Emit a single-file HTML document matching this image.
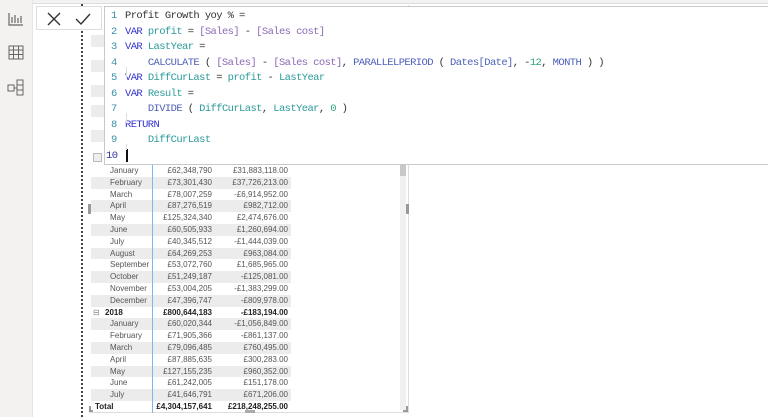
<!DOCTYPE html>
<html><head><meta charset="utf-8"><style>
*{margin:0;padding:0;box-sizing:border-box}
body{width:768px;height:417px;overflow:hidden;background:#fff;position:relative;font-family:"Liberation Sans",sans-serif}
.side{position:absolute;left:0;top:0;width:33px;height:417px;background:#f3f2f1;border-right:1px solid #e6e6e6}
.top{position:absolute;left:33px;top:0;right:0;height:4px;background:#f3f2f1;border-bottom:1px solid #ddd}
.dots{position:absolute;left:81px;top:4px;width:0;height:413px;border-left:2px dotted #444}
.frame{position:absolute;left:89px;top:5px;width:320px;height:408px;border-right:1px solid #ddd;border-bottom:1px solid #ddd}
.hdr{position:absolute;left:91px;top:5px;width:200px;height:160px}
.hdr div{position:absolute;left:0;width:200px;height:12px;background:#ececec}
.tb{position:absolute;left:91px;top:165px;font-size:8px;color:#555}
.r{position:relative;height:11.8px;width:200px;line-height:11.8px}
.r.s{background:#ececec}
.r span{position:absolute}
.m{left:19px}.a{right:79px}.b{right:3px}
.r.bold{font-weight:bold;color:#222}
.vline{position:absolute;left:152px;top:165px;width:1px;height:248px;background:#7ab8f0}
.sb{position:absolute;left:400px;top:165px;width:6px;height:245px;background:#f0f0f0}
.sb i{position:absolute;left:0;top:0;width:6px;height:11px;background:#c8c8c8}
.fb{position:absolute;left:104px;top:6px;width:664px;height:159px;background:#fff;border:1px solid #c8c8c8;border-right:none;font-family:"Liberation Mono",monospace;font-size:10.5px;letter-spacing:-0.6px}
.ln{position:absolute;left:6px;color:#3c8fa8}
.cd{position:absolute;left:20px;white-space:pre;color:#333}
.k{color:#3434d0}.v{color:#2b9a9a}.c{color:#8a69b5}.f{color:#4b5fb8}.n{color:#2fa37a}
.xc{position:absolute;left:36px;top:6px;width:66px;height:24px;background:#fff;border:1px solid #ddd}
</style></head><body>
<div class="side">
<svg style="position:absolute;left:8px;top:12px" width="16" height="14" viewBox="0 0 16 14"><path d="M1 1v12h14M4 11V5M7 11V3M10 11V6M13 11V4" stroke="#666" fill="none" stroke-width="1.2"/></svg>
<svg style="position:absolute;left:8px;top:45px" width="16" height="15" viewBox="0 0 16 15"><path d="M1 1h14v13H1zM1 5h14M1 9.5h14M5.5 1v13M10.5 1v13" stroke="#666" fill="none"/></svg>
<svg style="position:absolute;left:7px;top:79px" width="18" height="17" viewBox="0 0 18 17"><path d="M1 6h6v6H1zM10 1h6v5h-6zM10 6h6v5h-6zM10 11h6v5h-6zM7 9h3" stroke="#666" fill="none"/></svg>
</div>
<div class="top"></div>
<div class="dots"></div>
<div class="frame"></div>
<div class="hdr"><div style="top:30px"></div><div style="top:55px"></div><div style="top:80px"></div><div style="top:100px"></div><div style="top:125px"></div></div>
<div class="tb">
<div class="r"><span class="m">January</span><span class="a">£62,348,790</span><span class="b">£31,883,118.00</span></div>
<div class="r s"><span class="m">February</span><span class="a">£73,301,430</span><span class="b">£37,726,213.00</span></div>
<div class="r"><span class="m">March</span><span class="a">£78,007,259</span><span class="b">-£6,914,952.00</span></div>
<div class="r s"><span class="m">April</span><span class="a">£87,276,519</span><span class="b">£982,712.00</span></div>
<div class="r"><span class="m">May</span><span class="a">£125,324,340</span><span class="b">£2,474,676.00</span></div>
<div class="r s"><span class="m">June</span><span class="a">£60,505,933</span><span class="b">£1,260,694.00</span></div>
<div class="r"><span class="m">July</span><span class="a">£40,345,512</span><span class="b">-£1,444,039.00</span></div>
<div class="r s"><span class="m">August</span><span class="a">£64,269,253</span><span class="b">£963,084.00</span></div>
<div class="r"><span class="m">September</span><span class="a">£53,072,760</span><span class="b">£1,685,965.00</span></div>
<div class="r s"><span class="m">October</span><span class="a">£51,249,187</span><span class="b">-£125,081.00</span></div>
<div class="r"><span class="m">November</span><span class="a">£53,004,205</span><span class="b">-£1,383,299.00</span></div>
<div class="r s"><span class="m">December</span><span class="a">£47,396,747</span><span class="b">-£809,978.00</span></div>
<div class="r bold"><span style="left:2px;font-weight:normal;color:#888">⊟</span><span style="left:14px">2018</span><span class="a">£800,644,183</span><span class="b">-£183,194.00</span></div>
<div class="r s"><span class="m">January</span><span class="a">£60,020,344</span><span class="b">-£1,056,849.00</span></div>
<div class="r"><span class="m">February</span><span class="a">£71,905,366</span><span class="b">-£861,137.00</span></div>
<div class="r s"><span class="m">March</span><span class="a">£79,096,485</span><span class="b">£760,495.00</span></div>
<div class="r"><span class="m">April</span><span class="a">£87,885,635</span><span class="b">£300,283.00</span></div>
<div class="r s"><span class="m">May</span><span class="a">£127,155,235</span><span class="b">£960,352.00</span></div>
<div class="r"><span class="m">June</span><span class="a">£61,242,005</span><span class="b">£151,178.00</span></div>
<div class="r s"><span class="m">July</span><span class="a">£41,646,791</span><span class="b">£671,206.00</span></div>
<div class="r bold"><span style="left:4px">Total</span><span class="a">£4,304,157,641</span><span class="b">£218,248,255.00</span></div>
</div>
<div class="vline"></div>
<div class="sb"><i></i></div>
<div style="position:absolute;left:406px;top:204px;width:3px;height:10px;background:#999"></div>
<div style="position:absolute;left:88px;top:204px;width:3px;height:10px;background:#999"></div>
<div style="position:absolute;left:89px;top:406px;width:4px;height:6px;border-left:2px solid #999;border-bottom:2px solid #999"></div>
<div style="position:absolute;left:403px;top:406px;width:5px;height:6px;border-right:2px solid #999;border-bottom:2px solid #999"></div>
<div style="position:absolute;left:245px;top:410px;width:10px;height:3px;background:#aaa"></div>
<div style="position:absolute;left:93px;top:153px;width:9px;height:9px;border:1px solid #bbb;background:#eee"></div>
<div class="xc">
<svg style="position:absolute;left:10px;top:5px" width="14" height="14" viewBox="0 0 14 14"><path d="M1 1l12 12M13 1L1 13" stroke="#333" stroke-width="1.4"/></svg>
<svg style="position:absolute;left:38px;top:6px" width="16" height="12" viewBox="0 0 16 12"><path d="M1 6l5 5L15 1" stroke="#333" stroke-width="1.4" fill="none"/></svg>
</div>
<div class="fb">
<div class="ln" style="top:3px">1</div><div class="cd" style="top:3px">Profit Growth yoy % =</div>
<div class="ln" style="top:18.5px">2</div><div class="cd" style="top:18.5px"><span class="k">VAR</span> <span class="v">profit</span> = <span class="c">[Sales]</span> - <span class="c">[Sales cost]</span></div>
<div class="ln" style="top:34px">3</div><div class="cd" style="top:34px"><span class="k">VAR</span> <span class="v">LastYear</span> =</div>
<div class="ln" style="top:49.5px">4</div><div class="cd" style="top:49.5px">    <span class="f">CALCULATE</span> ( <span class="c">[Sales]</span> - <span class="c">[Sales cost]</span>, <span class="f">PARALLELPERIOD</span> ( <span class="f">Dates[Date]</span>, -<span class="n">12</span>, <span class="f">MONTH</span> ) )</div>
<div class="ln" style="top:65px">5</div><div class="cd" style="top:65px"><span class="k">VAR</span> <span class="v">DiffCurLast</span> = <span class="v">profit</span> - <span class="v">LastYear</span></div>
<div class="ln" style="top:80.5px">6</div><div class="cd" style="top:80.5px"><span class="k">VAR</span> <span class="v">Result</span> =</div>
<div class="ln" style="top:96px">7</div><div class="cd" style="top:96px">    <span class="f">DIVIDE</span> ( <span class="v">DiffCurLast</span>, <span class="v">LastYear</span>, <span class="n">0</span> )</div>
<div class="ln" style="top:111.5px">8</div><div class="cd" style="top:111.5px"><span class="k">RETURN</span></div>
<div class="ln" style="top:127px">9</div><div class="cd" style="top:127px">    <span class="v">DiffCurLast</span></div>
<div class="ln" style="top:142.5px;left:1px;color:#3434a0">10</div>
<div style="position:absolute;left:21px;top:142px;width:2px;height:13px;background:#111"></div>
<div style="position:absolute;left:21px;top:60px;width:1px;height:10px;background:#ddd"></div>
<div style="position:absolute;left:21px;top:106px;width:1px;height:10px;background:#ddd"></div>
<div style="position:absolute;left:21px;top:137px;width:1px;height:6px;background:#ddd"></div>
</div>
</body></html>
